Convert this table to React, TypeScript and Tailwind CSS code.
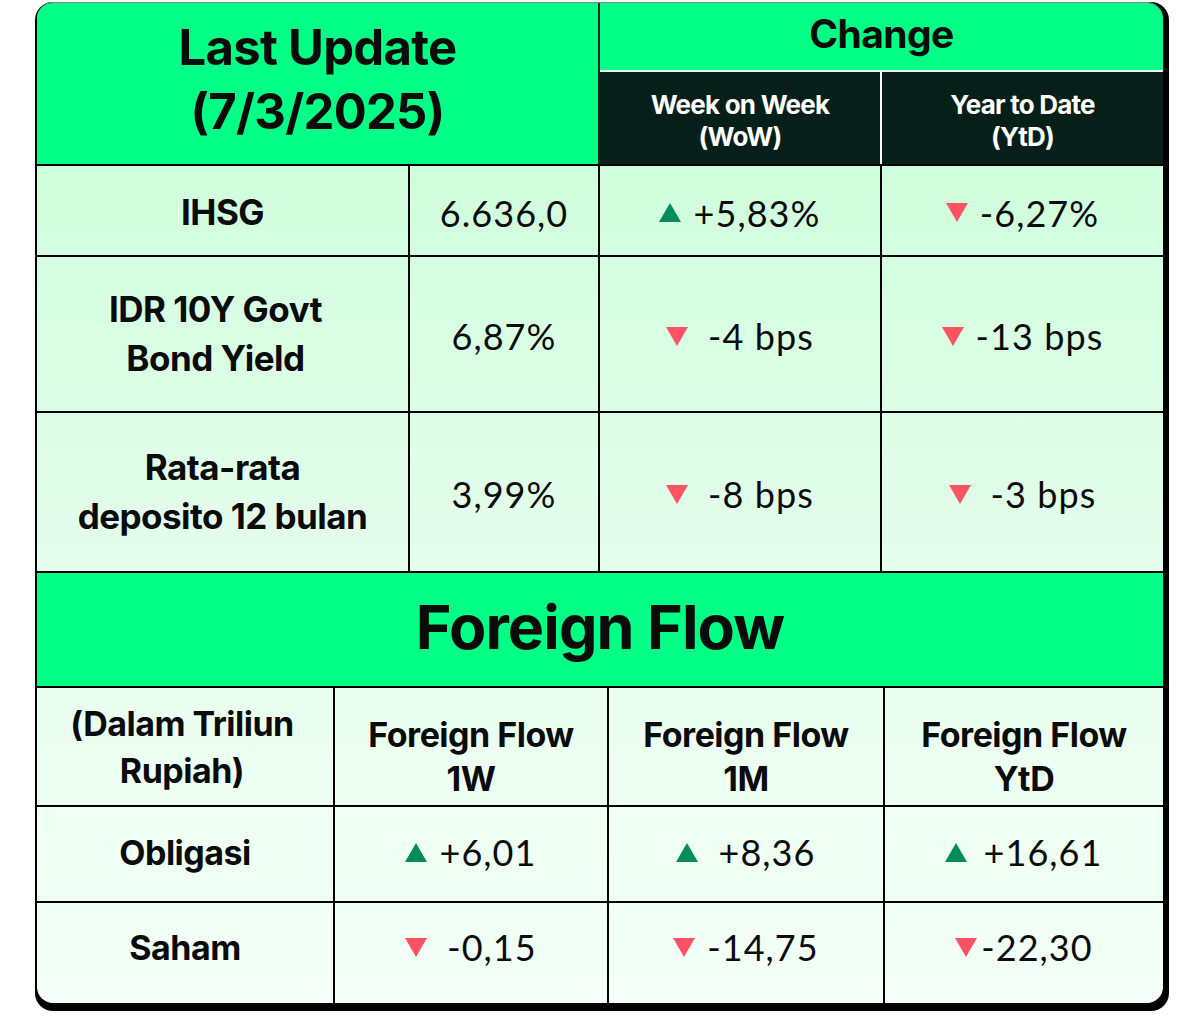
import React from 'react';

const Up = () => (
  <svg width="22" height="19" viewBox="0 0 22 19" className="shrink-0">
    <polygon points="11,0 22,19 0,19" fill="#008c5c" />
  </svg>
);

const Down = () => (
  <svg width="22" height="19" viewBox="0 0 22 19" className="shrink-0">
    <polygon points="0,0 22,0 11,19" fill="#ff5263" />
  </svg>
);

interface ChangeProps {
  dir: 'up' | 'down';
  value: string;
  gap?: string;
}

const Change: React.FC<ChangeProps> = ({ dir, value, gap = 'gap-3' }) => (
  <div className={`flex items-center justify-center ${gap}`}>
    {dir === 'up' ? <Up /> : <Down />}
    <span>{value}</span>
  </div>
);

const label = "font-['Inter',sans-serif] font-bold tracking-[-0.015em] text-[#0b0b0b]";
const num = "font-['Lato',sans-serif] text-[36px] text-[#0b0b0b] tracking-[0.03em] pt-[4px]";

export default function App() {
  return (
    <div className="w-[1200px] h-[1018px] bg-white pt-[2px] pl-[35px]">
      <div className="w-[1134px] h-[1009px] rounded-[18px] bg-black pl-[2px] pr-[6px] pb-[8px] pt-0">
        <div className="h-full rounded-[16px] overflow-hidden border-t border-[#8a8a8a] flex flex-col">
          {/* Header */}
          <div className="flex h-[163px] border-b-2 border-black">
            <div className="w-[563px] bg-[#02ff86] border-r-2 border-[#0a2a1c] flex flex-col items-center justify-center pb-[8px]">
              <div className={`${label} text-[49px] leading-[64px]`}>Last Update</div>
              <div className={`${label} text-[49px] leading-[64px]`}>(7/3/2025)</div>
            </div>
            <div className="flex-1 flex flex-col">
              <div className="h-[69px] bg-[#02ff86] border-b-2 border-[#e8fff0] flex items-center justify-center">
                <span className={`${label} text-[39px] pb-[4px]`}>Change</span>
              </div>
              <div className="flex-1 flex bg-[#071f19]">
                <div className="w-[282px] border-r-2 border-white flex flex-col items-center justify-center pt-[6px] text-white font-['Inter',sans-serif] font-bold text-[26px] leading-[32px] tracking-[-0.03em]">
                  <span>Week on Week</span>
                  <span>(WoW)</span>
                </div>
                <div className="flex-1 flex flex-col items-center justify-center pt-[6px] text-white font-['Inter',sans-serif] font-bold text-[26px] leading-[32px] tracking-[-0.03em]">
                  <span>Year to Date</span>
                  <span>(YtD)</span>
                </div>
              </div>
            </div>
          </div>

          {/* Top body */}
          <div className="bg-gradient-to-b from-[#cffedc] to-[#e5fded]">
            <div className="grid grid-cols-[373px_190px_282px_1fr] h-[91px] border-b-2 border-black">
              <div className={`${label} text-[35px] border-r-2 border-black flex items-center justify-center pt-[4px]`}>IHSG</div>
              <div className={`${num} border-r-2 border-black flex items-center justify-center`}>6.636,0</div>
              <div className={`${num} border-r-2 border-black flex items-center justify-center`}><Change dir="up" value="+5,83%" /></div>
              <div className={`${num} flex items-center justify-center`}><Change dir="down" value="-6,27%" /></div>
            </div>
            <div className="grid grid-cols-[373px_190px_282px_1fr] h-[156px] border-b-2 border-black">
              <div className={`${label} text-[35px] leading-[49px] border-r-2 border-black flex flex-col items-center justify-center pr-[14px]`}>
                <span>IDR 10Y Govt</span>
                <span>Bond Yield</span>
              </div>
              <div className={`${num} border-r-2 border-black flex items-center justify-center`}>6,87%</div>
              <div className={`${num} border-r-2 border-black flex items-center justify-center`}><Change dir="down" value="-4 bps" gap="gap-5" /></div>
              <div className={`${num} flex items-center justify-center`}><Change dir="down" value="-13 bps" gap="gap-3" /></div>
            </div>
            <div className="grid grid-cols-[373px_190px_282px_1fr] h-[160px] border-b-2 border-black">
              <div className={`${label} text-[35px] leading-[49px] border-r-2 border-black flex flex-col items-center justify-center`}>
                <span>Rata-rata</span>
                <span>deposito 12 bulan</span>
              </div>
              <div className={`${num} border-r-2 border-black flex items-center justify-center`}>3,99%</div>
              <div className={`${num} border-r-2 border-black flex items-center justify-center`}><Change dir="down" value="-8 bps" gap="gap-5" /></div>
              <div className={`${num} flex items-center justify-center`}><Change dir="down" value="-3 bps" gap="gap-5" /></div>
            </div>
          </div>

          {/* Foreign Flow header */}
          <div className="h-[115px] bg-[#02ff86] border-b-2 border-black flex items-center justify-center">
            <span className={`${label} text-[61px] pb-[4px]`}>Foreign Flow</span>
          </div>

          {/* Bottom body */}
          <div className="flex-1 bg-gradient-to-b from-[#eafff0] to-[#f3fff7] flex flex-col">
            <div className="grid grid-cols-[298px_274px_276px_1fr] h-[119px] border-b-2 border-black">
              <div className={`${label} text-[34px] leading-[47px] border-r-2 border-black flex flex-col items-center justify-center pr-[6px]`}>
                <span>(Dalam Triliun</span>
                <span>Rupiah)</span>
              </div>
              <div className={`${label} text-[34px] leading-[44px] border-r-2 border-black flex flex-col items-center justify-center pt-[20px]`}>
                <span>Foreign Flow</span>
                <span>1W</span>
              </div>
              <div className={`${label} text-[34px] leading-[44px] border-r-2 border-black flex flex-col items-center justify-center pt-[20px]`}>
                <span>Foreign Flow</span>
                <span>1M</span>
              </div>
              <div className={`${label} text-[34px] leading-[44px] flex flex-col items-center justify-center pt-[20px]`}>
                <span>Foreign Flow</span>
                <span>YtD</span>
              </div>
            </div>
            <div className="grid grid-cols-[298px_274px_276px_1fr] h-[96px] border-b-2 border-black">
              <div className={`${label} text-[34px] border-r-2 border-black flex items-center justify-center pb-[4px]`}>Obligasi</div>
              <div className={`${num} border-r-2 border-black flex items-center justify-center pb-[8px]`}><Change dir="up" value="+6,01" /></div>
              <div className={`${num} border-r-2 border-black flex items-center justify-center pb-[8px]`}><Change dir="up" value="+8,36" gap="gap-5" /></div>
              <div className={`${num} flex items-center justify-center pb-[8px]`}><Change dir="up" value="+16,61" gap="gap-4" /></div>
            </div>
            <div className="grid grid-cols-[298px_274px_276px_1fr] flex-1">
              <div className={`${label} text-[34px] border-r-2 border-black flex items-center justify-center pb-[12px]`}>Saham</div>
              <div className={`${num} border-r-2 border-black flex items-center justify-center pb-[16px]`}><Change dir="down" value="-0,15" gap="gap-5" /></div>
              <div className={`${num} border-r-2 border-black flex items-center justify-center pb-[16px]`}><Change dir="down" value="-14,75" gap="gap-3" /></div>
              <div className={`${num} flex items-center justify-center pb-[16px]`}><Change dir="down" value="-22,30" gap="gap-1" /></div>
            </div>
          </div>
        </div>
      </div>
    </div>
  );
}
